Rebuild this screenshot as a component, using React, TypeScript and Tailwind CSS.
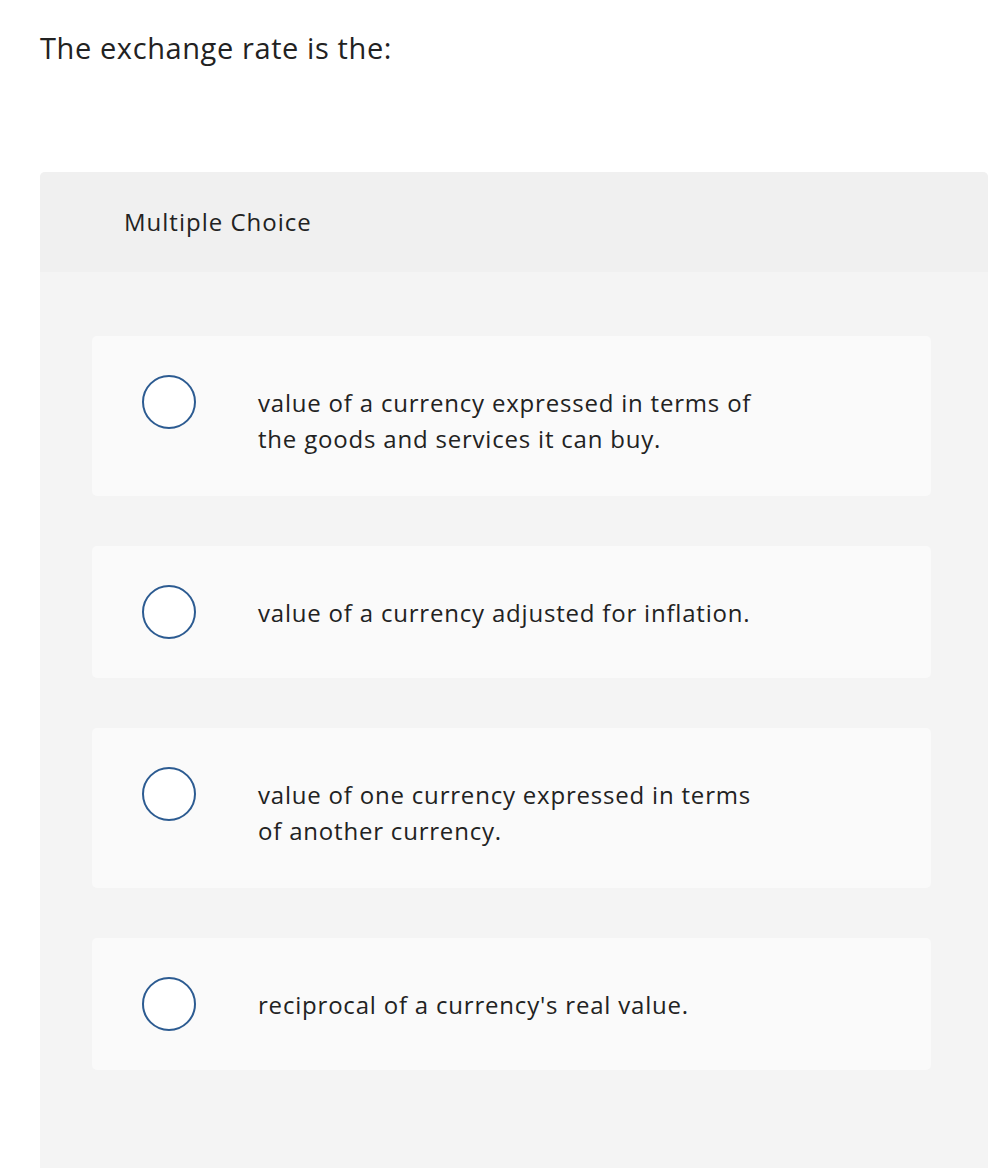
import React from 'react';

// Answer choices for the question
const choices = [
    'value of a currency expressed in terms of the goods and services it can buy.',
    'value of a currency adjusted for inflation.',
    'value of one currency expressed in terms of another currency.',
    "reciprocal of a currency's real value.",
];

function Choice({ label }: { label: string }) {
    return (
        <label className="flex cursor-pointer items-start rounded-[5px] bg-[#fafafa] py-[39px] pl-[50px] pr-[40px]">
            {/* Radio ring */}
            <span className="block h-[54px] w-[54px] shrink-0 rounded-full border-2 border-[#2c5b91] bg-white" />
            <span className="ml-[62px] mt-[10px] max-w-[522px] text-[24px] leading-[36px] tracking-[0.8px] text-[#222]">
                {label}
            </span>
        </label>
    );
}

export default function App() {
    return (
        <div
            className="min-h-[1168px] bg-white text-[#222]"
            style={{ fontFamily: '"Open Sans", Lato, sans-serif' }}>
            {/* Question prompt */}
            <div className="px-[40px] pt-[28px]">
                <h1 className="text-[29px] font-normal leading-[40px] tracking-[0.6px] text-[#222]">
                    The exchange rate is the:
                </h1>
            </div>

            {/* Answer panel */}
            <div className="ml-[40px] mt-[104px] overflow-hidden rounded-t-[5px] bg-[#f4f4f4]">
                <div className="flex h-[100px] items-center bg-[#f0f0f0] pl-[84px]">
                    <span className="text-[24px] tracking-[1px] text-[#222]">Multiple Choice</span>
                </div>
                <div className="flex flex-col gap-[50px] pb-[98px] pl-[52px] pr-[57px] pt-[64px]">
                    {choices.map(c => (
                        <Choice key={c} label={c} />
                    ))}
                </div>
            </div>
        </div>
    );
}
